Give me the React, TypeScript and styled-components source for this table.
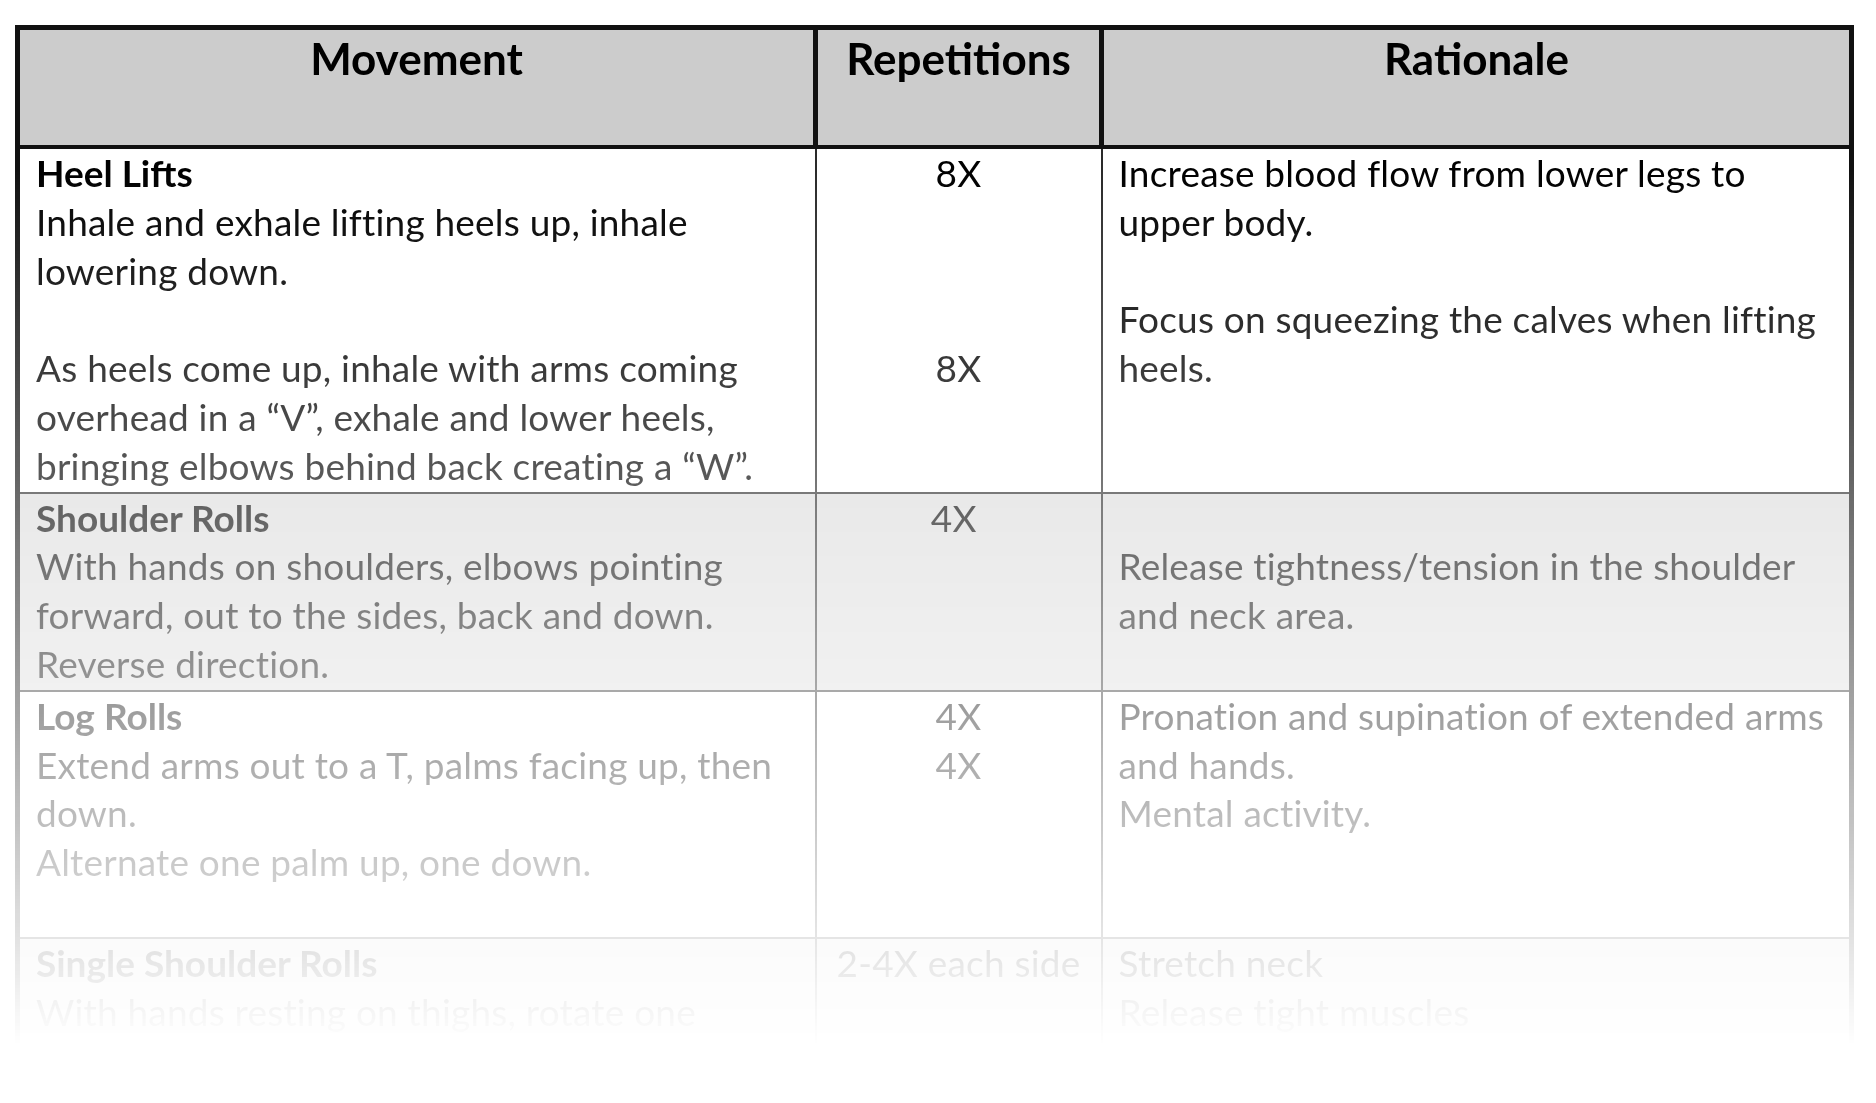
import React from "react";
import styled, { createGlobalStyle } from "styled-components";

const Global = createGlobalStyle`
  html, body { margin: 0; padding: 0; background: #ffffff; }
  body { font-family: Lato, "Liberation Sans", sans-serif; }
`;

const Page = styled.div`
  box-sizing: border-box;
  height: 1103px;
  padding: 25px 0 0 15px;
  overflow: hidden;
`;

const Fade = styled.div`
  width: 1845px;
  height: 1020px;
  overflow: hidden;
  -webkit-mask-image: linear-gradient(to bottom, #000 0px, #000 145px, rgba(0, 0, 0, 0) 1020px);
  mask-image: linear-gradient(to bottom, #000 0px, #000 145px, rgba(0, 0, 0, 0) 1020px);
`;

const Table = styled.table`
  border-collapse: collapse;
  table-layout: fixed;
  width: 1834px;
  border: 5px solid #111111;
  border-bottom: none;
  color: #000000;
  font-family: Lato, "Liberation Sans", sans-serif;
`;

const Col = styled.col<{ $w: number }>`
  width: ${(p) => p.$w}px;
`;

const HeadCell = styled.th`
  height: 115px;
  padding: 0;
  vertical-align: top;
  text-align: center;
  background: #cccccc;
  font-size: 44px;
  line-height: 56px;
  font-weight: 700;
  border-right: 5px solid #111111;
  border-bottom: 4px solid #111111;
`;

const Row = styled.tr<{ $shade?: boolean; $h?: number }>`
  background: ${(p) => (p.$shade ? "#dcdcdc" : "#ffffff")};
  height: ${(p) => (p.$h ? `${p.$h}px` : "auto")};
`;

const Cell = styled.td<{ $center?: boolean }>`
  padding: 0 8px 1px ${(p) => (p.$center ? "8px" : "16px")};
  vertical-align: top;
  text-align: ${(p) => (p.$center ? "center" : "left")};
  font-size: 37px;
  line-height: 48.8px;
  letter-spacing: 0.2px;
  white-space: nowrap;
  border-right: 2px solid #2a2a2a;
  border-bottom: 2px solid #2a2a2a;
`;

const Title = styled.div`
  font-weight: 700;
  letter-spacing: 0;
`;

const Line = styled.div`
  font-weight: 400;
`;

const Blank = () => <Line>&nbsp;</Line>;

export default function App() {
  return (
    <>
      <Global />
      <Page>
        <Fade>
          <Table>
            <colgroup>
              <Col $w={798} />
              <Col $w={286} />
              <Col $w={750} />
            </colgroup>
            <thead>
              <tr>
                <HeadCell>Movement</HeadCell>
                <HeadCell>Repetitions</HeadCell>
                <HeadCell>Rationale</HeadCell>
              </tr>
            </thead>
            <tbody>
              <Row>
                <Cell>
                  <Title>Heel Lifts</Title>
                  <Line>Inhale and exhale lifting heels up, inhale</Line>
                  <Line>lowering down.</Line>
                  <Blank />
                  <Line>As heels come up, inhale with arms coming</Line>
                  <Line>overhead in a “V”, exhale and lower heels,</Line>
                  <Line>bringing elbows behind back creating a “W”.</Line>
                </Cell>
                <Cell $center>
                  <Line>8X</Line>
                  <Blank />
                  <Blank />
                  <Blank />
                  <Line>8X</Line>
                </Cell>
                <Cell>
                  <Line>Increase blood flow from lower legs to</Line>
                  <Line>upper body.</Line>
                  <Blank />
                  <Line>Focus on squeezing the calves when lifting</Line>
                  <Line>heels.</Line>
                </Cell>
              </Row>
              <Row $shade>
                <Cell>
                  <Title>Shoulder Rolls</Title>
                  <Line>With hands on shoulders, elbows pointing</Line>
                  <Line>forward, out to the sides, back and down.</Line>
                  <Line>Reverse direction.</Line>
                </Cell>
                <Cell $center>
                  <Line>4X&nbsp;</Line>
                </Cell>
                <Cell>
                  <Blank />
                  <Line>Release tightness/tension in the shoulder</Line>
                  <Line>and neck area.</Line>
                </Cell>
              </Row>
              <Row>
                <Cell>
                  <Title>Log Rolls</Title>
                  <Line>Extend arms out to a T, palms facing up, then</Line>
                  <Line>down.</Line>
                  <Line>Alternate one palm up, one down.</Line>
                  <Blank />
                </Cell>
                <Cell $center>
                  <Line>4X</Line>
                  <Line>4X</Line>
                </Cell>
                <Cell>
                  <Line>Pronation and supination of extended arms</Line>
                  <Line>and hands.</Line>
                  <Line>Mental activity.</Line>
                </Cell>
              </Row>
              <Row $shade $h={220}>
                <Cell>
                  <Title>Single Shoulder Rolls</Title>
                  <Line>With hands resting on thighs, rotate one</Line>
                </Cell>
                <Cell $center>
                  <Line>2-4X each side</Line>
                </Cell>
                <Cell>
                  <Line>Stretch neck</Line>
                  <Line>Release tight muscles</Line>
                </Cell>
              </Row>
            </tbody>
          </Table>
        </Fade>
      </Page>
    </>
  );
}
